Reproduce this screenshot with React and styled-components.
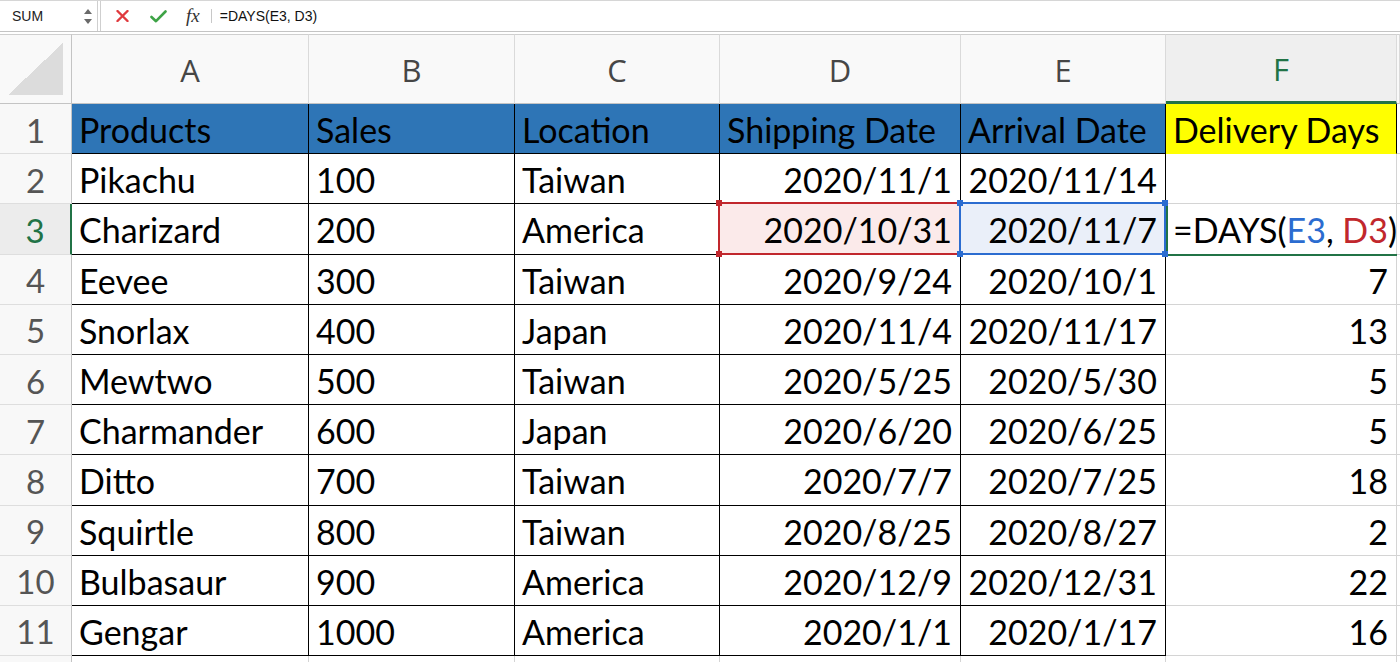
import React from "react";
import styled, { createGlobalStyle } from "styled-components";

const GlobalStyle = createGlobalStyle`
  html, body { margin: 0; padding: 0; background: #ffffff; }
  body { font-family: "Lato", "Liberation Sans", sans-serif; overflow: hidden; }
`;

const COLS = "72px 237px 206px 205px 241px 205px 231px 1fr";
const GREEN = "#217346";

const Page = styled.div`
  width: 1400px;
  height: 662px;
  overflow: hidden;
  background: #fff;
`;

const FormulaBar = styled.div`
  display: flex;
  align-items: center;
  height: 32px;
  box-sizing: border-box;
  border-top: 1px solid #d6d6d6;
  border-bottom: 1px solid #c4c4c4;
  font-family: "Liberation Sans", Arial, sans-serif;
`;

const NameBox = styled.div`
  display: flex;
  align-items: center;
  justify-content: space-between;
  width: 98px;
  height: 100%;
  box-sizing: border-box;
  padding: 0 5px 0 12px;
  border-right: 1px solid #cfcfcf;
  font-size: 14px;
  color: #222;
`;

const Spinner = styled.div`
  display: flex;
  flex-direction: column;
  gap: 5px;
`;

const Tri = styled.div`
  width: 0;
  height: 0;
  border-left: 4px solid transparent;
  border-right: 4px solid transparent;
  ${p => (p.$up ? "border-bottom: 5px solid #6a6a6a;" : "border-top: 5px solid #6a6a6a;")}
`;

const BarTools = styled.div`
  display: flex;
  align-items: center;
  height: 100%;
  margin-left: 2px;
  padding-left: 15px;
  border-left: 1px solid #cfcfcf;
  gap: 21px;
`;

const Fx = styled.span`
  font-family: "Liberation Serif", "Times New Roman", serif;
  font-style: italic;
  font-size: 19px;
  color: #333;
  margin-left: -2px;
`;

const Sep = styled.div`
  width: 1px;
  height: 14px;
  background: #c8c8c8;
  margin: 0 8px 0 11px;
`;

const FormulaText = styled.div`
  font-size: 14px;
  color: #111;
`;

const Sheet = styled.div`
  margin-top: 2px;
`;

const Row = styled.div`
  display: grid;
  grid-template-columns: ${COLS};
  height: ${p => p.$h}px;
`;

const Corner = styled.div`
  position: relative;
  box-sizing: border-box;
  border-top: 1px solid #cfcfcf;
  border-right: 1px solid #c4c4c4;
  border-bottom: 1px solid #c4c4c4;
  background: #f9f9f9;
  padding: 8px;
  display: flex;
`;

const CornerTri = styled.div`
  flex: 1;
  background: linear-gradient(to top left, #dcdcdc 50%, transparent 50%);
`;

const ColHead = styled.div`
  box-sizing: border-box;
  display: flex;
  align-items: center;
  justify-content: center;
  border-top: 1px solid #cfcfcf;
  border-right: 1px solid #dadada;
  border-bottom: ${p => (p.$active ? `3px solid ${GREEN}` : "1px solid #c4c4c4")};
  background: ${p => (p.$active ? "#efefef" : "#f9f9f9")};
  color: ${p => (p.$active ? GREEN : "#464646")};
  font-family: "Open Sans", "Lato", sans-serif;
  font-size: 31px;
  padding-top: 2px;
`;

const RowHead = styled.div`
  box-sizing: border-box;
  display: flex;
  align-items: center;
  justify-content: center;
  padding-top: 2px;
  background: ${p => (p.$active ? "#ececec" : "#f8f8f8")};
  border-bottom: 1px solid #dedede;
  border-right: ${p => (p.$active ? `2px solid ${GREEN}` : "1px solid #c4c4c4")};
  color: ${p => (p.$active ? GREEN : "#555555")};
  font-family: "Lato", sans-serif;
  font-size: 33px;
  font-weight: 400;
`;

const Cell = styled.div`
  position: relative;
  box-sizing: border-box;
  display: flex;
  align-items: center;
  justify-content: ${p => (p.$align === "right" ? "flex-end" : "flex-start")};
  padding: 2px 8px 0 7px;
  background: ${p => p.$bg || "#fff"};
  border-right: 1px solid ${p => p.$rline || "#000"};
  border-bottom: 1px solid ${p => p.$bline || "#000"};
  font-family: "Lato", "Liberation Sans", sans-serif;
  font-size: 34px;
  color: #000;
  white-space: nowrap;
  overflow: visible;
  z-index: ${p => p.$z || 0};
`;

const RefBox = styled.div`
  position: absolute;
  top: -2px;
  left: -2px;
  right: -1px;
  bottom: -1px;
  border: 2px solid ${p => p.$color};
  pointer-events: none;
`;

const Handle = styled.span`
  position: absolute;
  width: 6px;
  height: 6px;
  background: ${p => p.$color};
  ${p => (p.$top ? "top: -4px;" : "bottom: -4px;")}
  ${p => (p.$left ? "left: -4px;" : "right: -4px;")}
`;

const ActiveBox = styled.div`
  position: absolute;
  top: -1px;
  left: 0;
  right: -1px;
  bottom: -2px;
  border-left: 2px solid ${GREEN};
  border-bottom: 2px solid ${GREEN};
  pointer-events: none;
`;

const Formula = styled.span`
  white-space: pre;
`;

const Ref = styled.span`
  color: ${p => p.$color};
`;

const RED = "#c1272d";
const BLUE = "#2b6cd0";

function RefFrame({ color }) {
  return (
    <RefBox $color={color}>
      <Handle $color={color} $top $left />
      <Handle $color={color} $top />
      <Handle $color={color} $left />
      <Handle $color={color} />
    </RefBox>
  );
}

const data = [
  ["Pikachu", "100", "Taiwan", "2020/11/1", "2020/11/14", ""],
  ["Charizard", "200", "America", "2020/10/31", "2020/11/7", "formula"],
  ["Eevee", "300", "Taiwan", "2020/9/24", "2020/10/1", "7"],
  ["Snorlax", "400", "Japan", "2020/11/4", "2020/11/17", "13"],
  ["Mewtwo", "500", "Taiwan", "2020/5/25", "2020/5/30", "5"],
  ["Charmander", "600", "Japan", "2020/6/20", "2020/6/25", "5"],
  ["Ditto", "700", "Taiwan", "2020/7/7", "2020/7/25", "18"],
  ["Squirtle", "800", "Taiwan", "2020/8/25", "2020/8/27", "2"],
  ["Bulbasaur", "900", "America", "2020/12/9", "2020/12/31", "22"],
  ["Gengar", "1000", "America", "2020/1/1", "2020/1/17", "16"],
];

const LIGHT = "#d4d4d4";
const ROW_H = 50.2;

export default function App() {
  return (
    <Page>
      <GlobalStyle />
      <FormulaBar>
        <NameBox>
          <span>SUM</span>
          <Spinner>
            <Tri $up />
            <Tri />
          </Spinner>
        </NameBox>
        <BarTools>
          <svg width="13" height="12" viewBox="0 0 13 12">
            <path d="M1.5 1 L11.5 11 M11.5 1 L1.5 11" stroke="#e03a3e" strokeWidth="2.4" strokeLinecap="round" />
          </svg>
          <svg width="17" height="13" viewBox="0 0 17 13">
            <path d="M1.5 7 L6 11.2 L15.5 1.5" stroke="#3ea346" strokeWidth="2.6" fill="none" strokeLinecap="round" strokeLinejoin="round" />
          </svg>
          <Fx>fx</Fx>
        </BarTools>
        <Sep />
        <FormulaText>=DAYS(E3, D3)</FormulaText>
      </FormulaBar>

      <Sheet>
        <Row $h={70}>
          <Corner>
            <CornerTri />
          </Corner>
          {["A", "B", "C", "D", "E", "F"].map(l => (
            <ColHead key={l} $active={l === "F"}>
              {l}
            </ColHead>
          ))}
          <ColHead />
        </Row>

        <Row $h={ROW_H}>
          <RowHead>1</RowHead>
          {["Products", "Sales", "Location", "Shipping Date", "Arrival Date"].map(t => (
            <Cell key={t} $bg="#2e75b6">
              {t}
            </Cell>
          ))}
          <Cell $bg="#ffff00" $bline="#ffff00">
            Delivery Days
          </Cell>
          <Cell $rline={LIGHT} $bline={LIGHT} />
        </Row>

        {data.map((r, i) => {
          const n = i + 2;
          const active = n === 3;
          return (
            <Row key={n} $h={ROW_H}>
              <RowHead $active={active}>{n}</RowHead>
              <Cell>{r[0]}</Cell>
              <Cell>{r[1]}</Cell>
              <Cell>{r[2]}</Cell>
              <Cell $align="right" $bg={active ? "#fbeaea" : undefined} $z={active ? 2 : 0}>
                {r[3]}
                {active && <RefFrame color={RED} />}
              </Cell>
              <Cell $align="right" $bg={active ? "#eaeff9" : undefined} $z={active ? 2 : 0}>
                {r[4]}
                {active && <RefFrame color={BLUE} />}
              </Cell>
              {active ? (
                <Cell $rline={LIGHT} $bline={LIGHT} $z={1}>
                  <Formula>
                    {"=DAYS("}
                    <Ref $color={BLUE}>E3</Ref>
                    {", "}
                    <Ref $color={RED}>D3</Ref>
                    {")"}
                  </Formula>
                  <ActiveBox />
                </Cell>
              ) : (
                <Cell $align="right" $rline={LIGHT} $bline={LIGHT}>
                  {r[5]}
                </Cell>
              )}
              <Cell $rline={LIGHT} $bline={LIGHT} />
            </Row>
          );
        })}
        <Row $h={ROW_H}>
          <RowHead />
          {[0, 1, 2, 3, 4, 5, 6].map(k => (
            <Cell key={k} $rline={LIGHT} $bline={LIGHT} />
          ))}
        </Row>
      </Sheet>
    </Page>
  );
}
